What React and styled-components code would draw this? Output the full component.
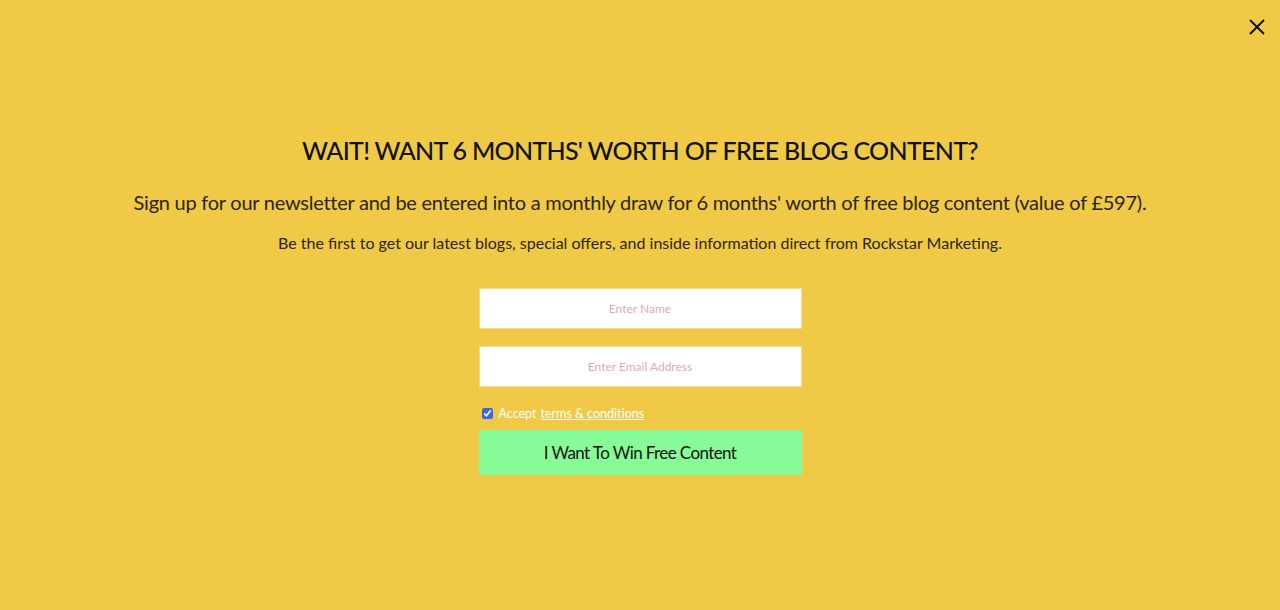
import React, { useState } from "react";
import styled, { createGlobalStyle } from "styled-components";

const GlobalStyle = createGlobalStyle`
  html, body {
    margin: 0;
    padding: 0;
    background: #f0ca47;
  }
  body {
    font-family: Lato, "Open Sans", sans-serif;
  }
`;

const Page = styled.div`
  width: 1280px;
  height: 610px;
  background: #f0ca47;
  display: flex;
  flex-direction: column;
  align-items: center;
  box-sizing: border-box;
  padding-top: 134px;
  position: relative;
  overflow: hidden;
`;

const CloseButton = styled.button`
  position: absolute;
  top: 17px;
  right: 13px;
  width: 20px;
  height: 20px;
  padding: 0;
  border: none;
  background: none;
  cursor: pointer;
`;

const Title = styled.h1`
  margin: 0;
  font-size: 25px;
  font-weight: 500;
  letter-spacing: -0.7px;
  color: #111;
  line-height: 32px;
`;

const Lead = styled.p`
  margin: 22px 0 0;
  font-size: 20px;
  font-weight: 400;
  letter-spacing: -0.25px;
  color: #2a2410;
  line-height: 28px;
`;

const Sub = styled.p`
  margin: 16px 0 0;
  font-size: 16px;
  color: #2a2410;
  line-height: 22px;
`;

const Form = styled.form`
  width: 323px;
  margin-top: 34px;
  display: flex;
  flex-direction: column;
`;

const Input = styled.input`
  height: 41px;
  box-sizing: border-box;
  border: 1px solid #f6dc86;
  background: #fff;
  text-align: center;
  font-family: Lato, sans-serif;
  font-size: 12px;
  outline: none;
  & + & {
    margin-top: 17px;
  }
  &::placeholder {
    color: #e2a7bd;
  }
`;

const CheckRow = styled.label`
  display: flex;
  align-items: center;
  margin: 18px 0 0 3px;
  font-size: 12.5px;
  color: #fff;
  height: 16px;
  input {
    margin: 0 6px 0 0;
    width: 11px;
    height: 11px;
    accent-color: #3c64f0;
  }
  a {
    color: #fff;
    margin-left: 4px;
  }
`;

const Submit = styled.button`
  margin-top: 9px;
  height: 45px;
  border: none;
  background: #86fb97;
  font-family: Lato, sans-serif;
  font-size: 17px;
  letter-spacing: -0.6px;
  color: #111;
  cursor: pointer;
`;

export default function App() {
  const [agree, setAgree] = useState(true);
  return (
    <>
      <GlobalStyle />
      <Page>
        <CloseButton aria-label="Close">
          <svg width="20" height="20" viewBox="0 0 20 20">
            <path d="M3 3 L17 17 M17 3 L3 17" stroke="#111" strokeWidth="2" />
          </svg>
        </CloseButton>
        <Title>WAIT! WANT 6 MONTHS' WORTH OF FREE BLOG CONTENT?</Title>
        <Lead>
          Sign up for our newsletter and be entered into a monthly draw for 6
          months' worth of free blog content (value of £597).
        </Lead>
        <Sub>
          Be the first to get our latest blogs, special offers, and inside
          information direct from Rockstar Marketing.
        </Sub>
        <Form onSubmit={(e) => e.preventDefault()}>
          <Input placeholder="Enter Name" />
          <Input placeholder="Enter Email Address" />
          <CheckRow>
            <input
              type="checkbox"
              checked={agree}
              onChange={(e) => setAgree(e.target.checked)}
            />
            Accept<a href="#">terms &amp; conditions</a>
          </CheckRow>
          <Submit type="submit">I Want To Win Free Content</Submit>
        </Form>
      </Page>
    </>
  );
}
